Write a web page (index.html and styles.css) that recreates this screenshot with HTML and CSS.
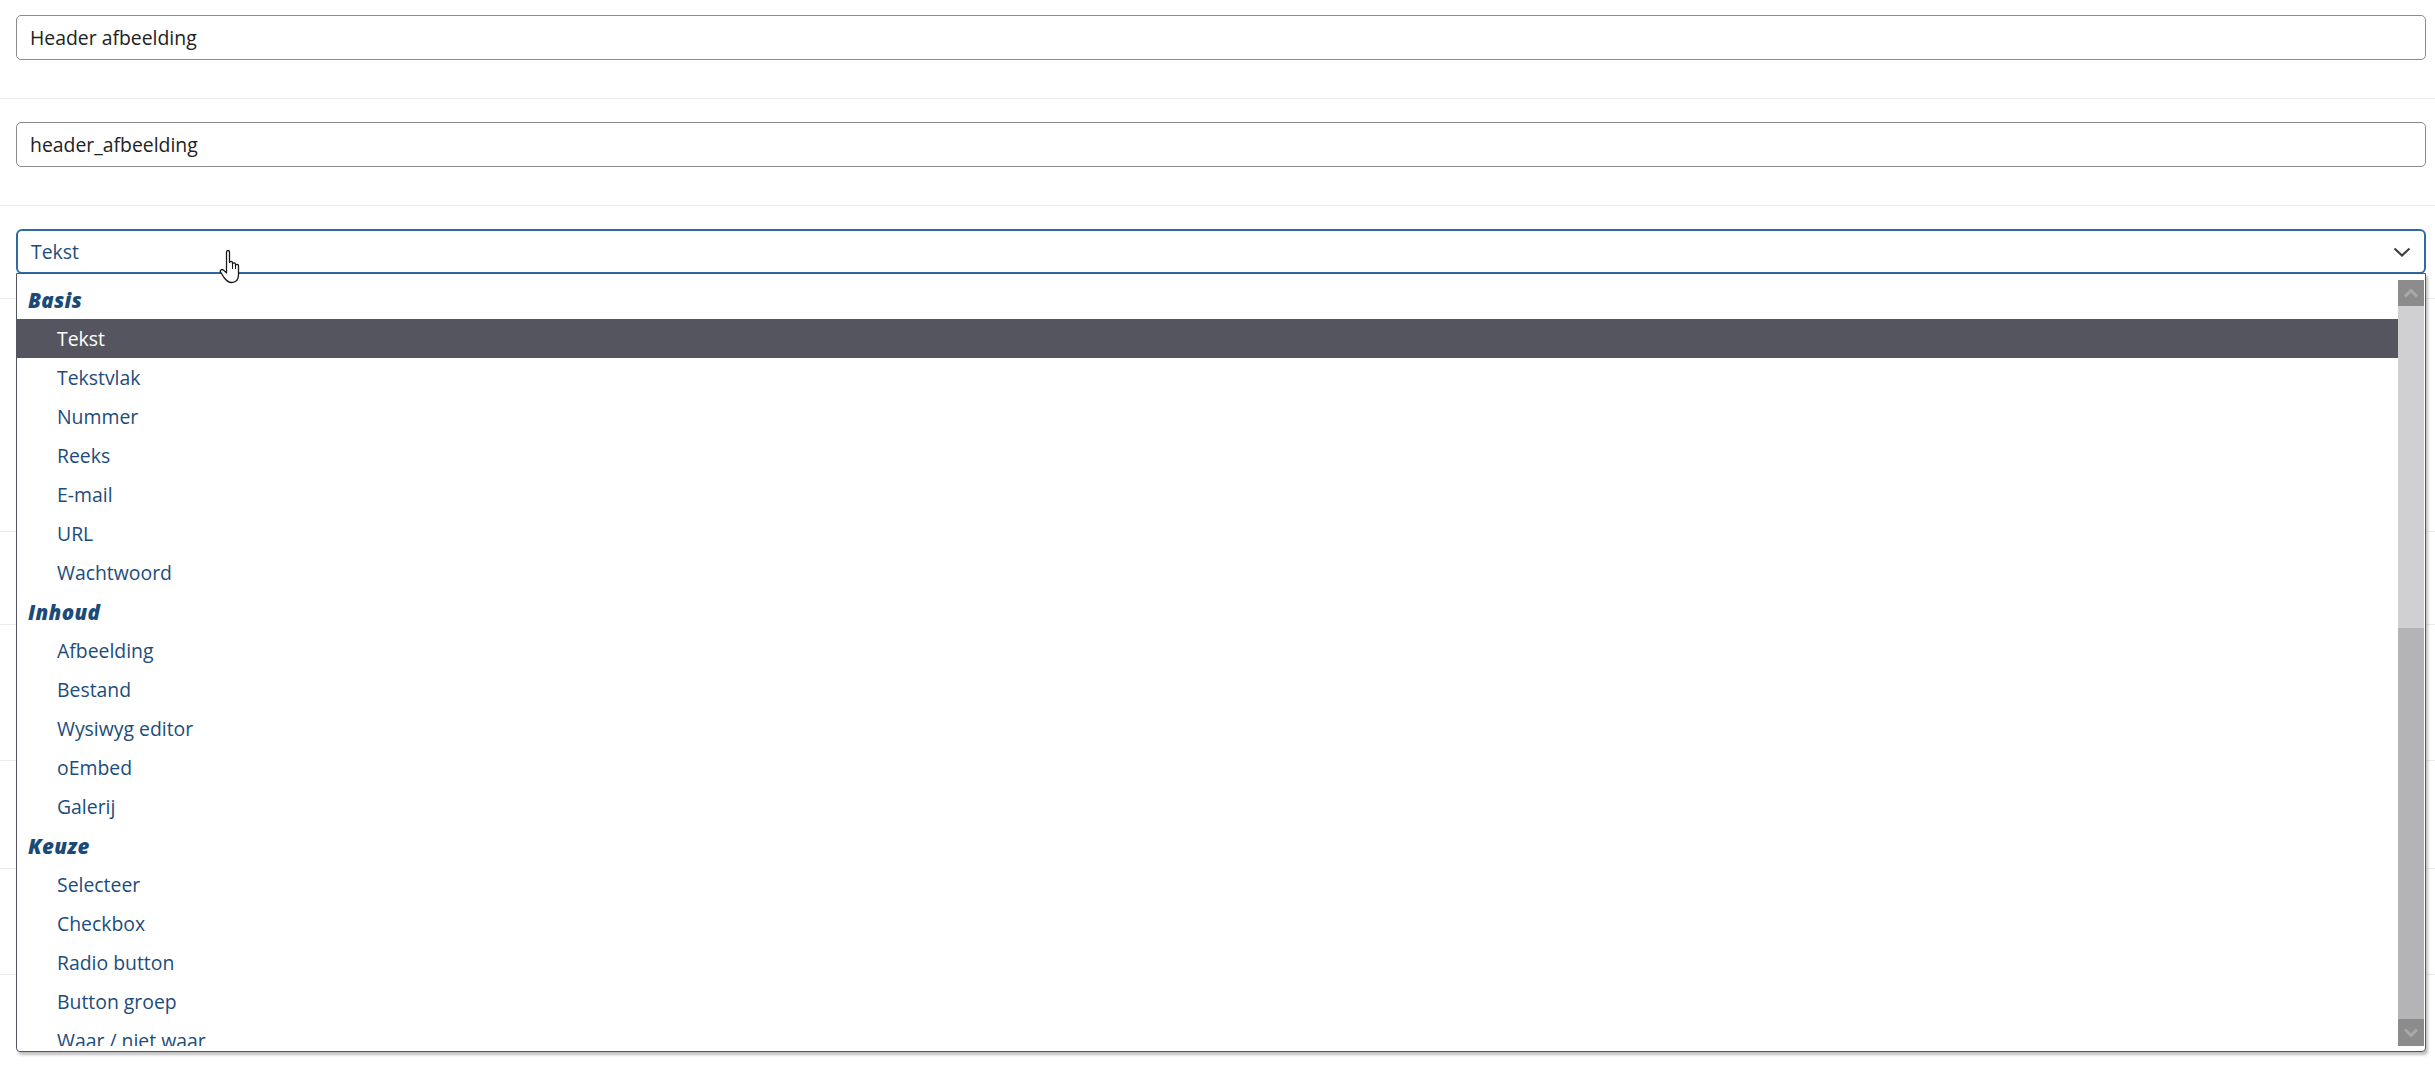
FILE: index.html
```html
<!DOCTYPE html>
<html lang="nl">
<head>
<meta charset="utf-8">
<title>Veld instellingen</title>
<link rel="stylesheet" href="styles.css">
</head>
<body>
<div class="form">
  <div class="row row-1">
    <div class="field">Header afbeelding</div>
  </div>
  <div class="row row-2">
    <div class="field">header_afbeelding</div>
  </div>
  <div class="row row-3">
    <div class="select-wrap">
      <div class="select">
        <span>Tekst</span>
        <svg class="chevron" width="18" height="10" viewBox="0 0 18 10"><path d="M1.5 1.5 L9 8.5 L16.5 1.5" fill="none" stroke="#404040" stroke-width="2.2"/></svg>
      </div>
      <div class="dropdown">
        <div class="list">
          <div class="group">Basis</div>
          <div class="opt active">Tekst</div>
          <div class="opt">Tekstvlak</div>
          <div class="opt">Nummer</div>
          <div class="opt">Reeks</div>
          <div class="opt">E-mail</div>
          <div class="opt">URL</div>
          <div class="opt">Wachtwoord</div>
          <div class="group">Inhoud</div>
          <div class="opt">Afbeelding</div>
          <div class="opt">Bestand</div>
          <div class="opt">Wysiwyg editor</div>
          <div class="opt">oEmbed</div>
          <div class="opt">Galerij</div>
          <div class="group">Keuze</div>
          <div class="opt">Selecteer</div>
          <div class="opt">Checkbox</div>
          <div class="opt">Radio button</div>
          <div class="opt">Button groep</div>
          <div class="opt">Waar / niet waar</div>
        </div>
        <div class="scrollbar">
          <div class="sb-btn"><svg width="16" height="10" viewBox="0 0 16 10"><path d="M2 8.5 L8 2.5 L14 8.5" fill="none" stroke="#a9a9a9" stroke-width="3"/></svg></div>
          <div class="sb-track"></div>
          <div class="sb-thumb"></div>
          <div class="sb-btn sb-down"><svg width="16" height="10" viewBox="0 0 16 10"><path d="M2 1.5 L8 7.5 L14 1.5" fill="none" stroke="#a9a9a9" stroke-width="3"/></svg></div>
        </div>
      </div>
      <svg class="cursor" width="26" height="36" viewBox="0 0 26 36">
        <path d="M7.5 3 C7.5 1 10.5 1 10.5 3 L10.5 13.5 C10.5 12 13.5 12 13.5 13.5 L13.5 15 C13.5 13.5 16.5 13.5 16.5 15 L16.5 16.5 C16.5 15 19.5 15 19.5 16.5 L19.5 25.5 C19.5 30.5 17 33.5 12.5 33.5 C9 33.5 7.2 31.5 5 28.5 L1.6 23.2 C0.6 21.6 2.6 19.6 4.3 21 L7.5 23.8 Z" fill="#ffffff" stroke="#1a1a1a" stroke-width="1.3" stroke-linejoin="round"/>
        <path d="M13.5 15 L13.5 20 M16.5 16.5 L16.5 20" fill="none" stroke="#1a1a1a" stroke-width="1"/>
      </svg>
    </div>
  </div>
  <div class="row row-4"></div>
  <div class="row row-5"></div>
  <div class="row row-6"></div>
  <div class="row row-7"></div>
  <div class="row row-8"></div>
  <div class="row row-9"></div>
</div>
</body>
</html>
```
FILE: styles.css
```css
* { box-sizing: border-box; }
html, body {
  margin: 0;
  padding: 0;
  background: #ffffff;
  font-family: "Open Sans", "Noto Sans", "Liberation Sans", sans-serif;
  overflow: hidden;
}
.form {
  width: 100%;
}
.row {
  border-bottom: 1.5px solid #ececec;
  padding: 0 9px 0 16px;
}
.row-1 { height: 99px; padding-top: 15px; }
.row-2 { height: 107px; padding-top: 23px; }
.row-3 { height: 93px; padding-top: 23px; }
.row-4 { height: 233px; }
.row-5 { height: 93px; }
.row-6 { height: 136px; }
.row-7 { height: 108px; }
.row-8 { height: 106px; }
.row-9 { height: 120px; border-bottom: none; }

.field {
  height: 45px;
  border: 1.5px solid #8c8c8c;
  border-radius: 5px;
  padding: 0 13px;
  display: flex;
  align-items: center;
  font-size: 19.4px;
  color: #222222;
}
.select-wrap {
  position: relative;
}
.select {
  height: 45px;
  border: 2px solid #2f6aa5;
  border-radius: 6px;
  padding: 0 12px 0 13px;
  display: flex;
  align-items: center;
  justify-content: space-between;
  font-size: 19.4px;
  color: #1c4c7c;
}
.chevron {
  display: block;
  margin-right: 1px;
}
.dropdown {
  position: absolute;
  top: 44px;
  left: 0;
  right: 0;
  height: 779px;
  background: #ffffff;
  border: 1.5px solid #555560;
  border-radius: 0 0 4px 4px;
  padding: 6px 1px 5px 0;
  display: flex;
  box-shadow: 2px 3px 3px rgba(0, 0, 0, 0.25);
  z-index: 5;
}
.list {
  flex: 1;
  overflow: hidden;
}
.group, .opt {
  height: 39px;
  display: flex;
  align-items: center;
  font-size: 19.4px;
  color: #1c4c7c;
  white-space: nowrap;
}
.group {
  padding-left: 11px;
  font-weight: 800;
  font-style: italic;
  font-size: 20.5px;
  letter-spacing: 0.3px;
  color: #1a4a78;
}
.opt {
  padding-left: 40px;
}
.opt.active {
  background: #55555f;
  color: #ffffff;
}
.scrollbar {
  width: 26px;
  display: flex;
  flex-direction: column;
}
.sb-btn {
  height: 26px;
  background: #8c8c8c;
  display: flex;
  align-items: center;
  justify-content: center;
}
.sb-down {
  height: 27px;
}
.sb-track {
  height: 322px;
  background: #d0d0d2;
}
.sb-thumb {
  flex: 1;
  background: #b4b4b6;
}
.cursor {
  position: absolute;
  left: 203px;
  top: 20px;
  z-index: 6;
}
```
